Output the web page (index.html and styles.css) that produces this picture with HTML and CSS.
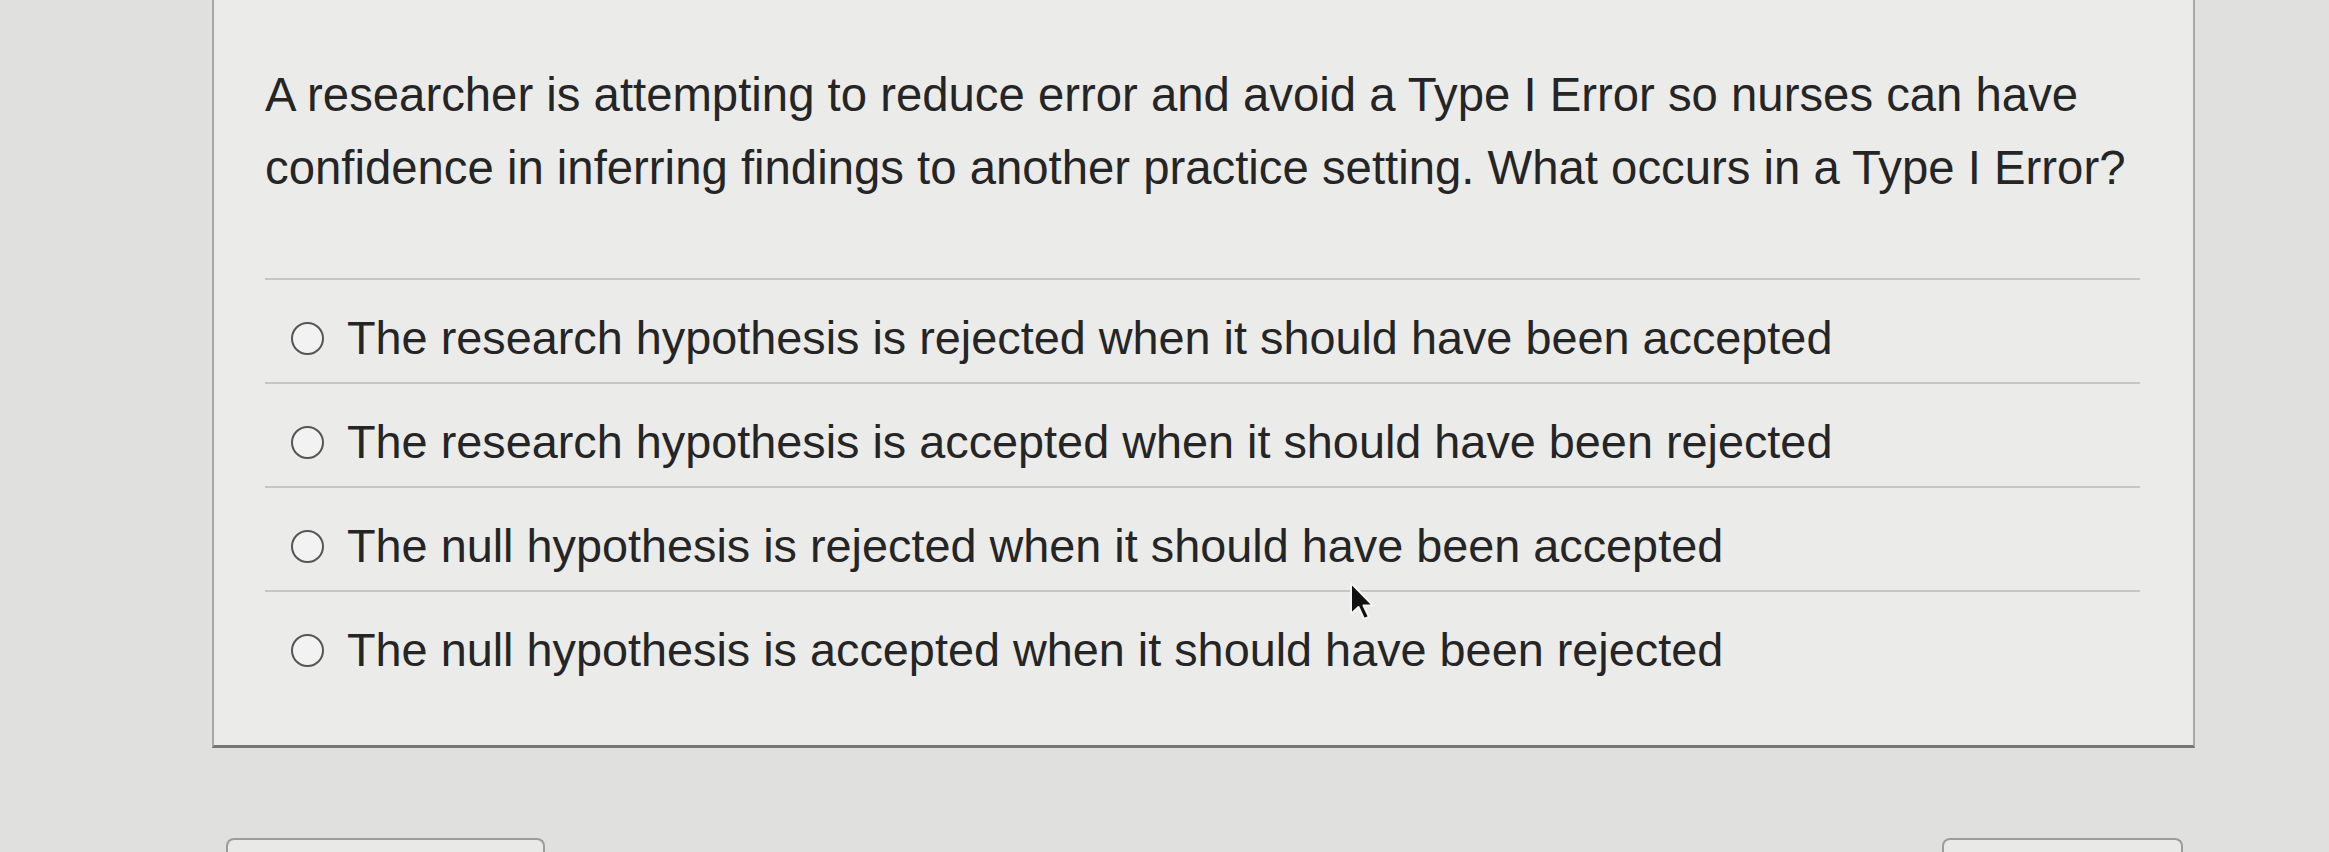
FILE: index.html
```html
<!DOCTYPE html>
<html lang="en">
<head>
<meta charset="utf-8">
<title>Question</title>
<link rel="stylesheet" href="styles.css">
</head>
<body>
<div class="page">
  <div class="card">
    <p class="question">A researcher is attempting to reduce error and avoid a Type I Error so nurses can have confidence in inferring findings to another practice setting. What occurs in a Type I Error?</p>
    <ul class="options">
      <li class="option"><span class="radio"></span><span class="label">The research hypothesis is rejected when it should have been accepted</span></li>
      <li class="option"><span class="radio"></span><span class="label">The research hypothesis is accepted when it should have been rejected</span></li>
      <li class="option"><span class="radio"></span><span class="label">The null hypothesis is rejected when it should have been accepted</span></li>
      <li class="option"><span class="radio"></span><span class="label">The null hypothesis is accepted when it should have been rejected</span></li>
    </ul>
  </div>
  <div class="actions">
    <div class="btn btn-left"></div>
    <div class="btn btn-right"></div>
  </div>
</div>
<svg class="cursor" width="28" height="42" viewBox="0 0 28 42" aria-hidden="true">
  <path d="M2 2 L2 33 L9.5 26 L15 38 L20 36 L14.5 24.5 L24 24.5 Z" fill="#111" stroke="#f4f4f4" stroke-width="2" stroke-linejoin="round"/>
</svg>
</body>
</html>
```
FILE: styles.css
```css
html, body {
  margin: 0;
  padding: 0;
  height: 852px;
  overflow: hidden;
}

body {
  background: #e0e0df;
  font-family: "Liberation Sans", Arial, sans-serif;
  color: #252525;
  position: relative;
}

.page {
  padding: 0 134px 0 212px;
}

.card {
  background: #ebebea;
  border-left: 2px solid #a8a8a8;
  border-right: 2px solid #a8a8a8;
  border-bottom: 3px solid #777;
  padding: 58px 53px 51px 51px;
}

.question {
  margin: 0 0 74px 0;
  font-size: 47.3px;
  line-height: 73px;
}

.options {
  list-style: none;
  margin: 0;
  padding: 0;
  border-top: 2px solid #c6c6c6;
}

.option {
  display: flex;
  align-items: center;
  padding: 31px 0 17px 26px;
  border-bottom: 2px solid #c6c6c6;
  font-size: 46.8px;
  line-height: 54px;
}

.option:last-child {
  border-bottom: none;
}

.radio {
  flex: none;
  width: 29px;
  height: 29px;
  border: 2.5px solid #555;
  border-radius: 50%;
  background: #f2f2f2;
  margin-right: 23px;
}

.actions {
  display: flex;
  justify-content: space-between;
  margin: 90px 12px 0 14px;
}

.btn {
  height: 12px;
  border: 2px solid #9c9c9c;
  border-bottom: none;
  border-radius: 8px 8px 0 0;
  background: #e9e9e8;
}

.btn-left {
  width: 315px;
}

.btn-right {
  width: 237px;
}

.cursor {
  position: absolute;
  left: 1349px;
  top: 581px;
}
```
